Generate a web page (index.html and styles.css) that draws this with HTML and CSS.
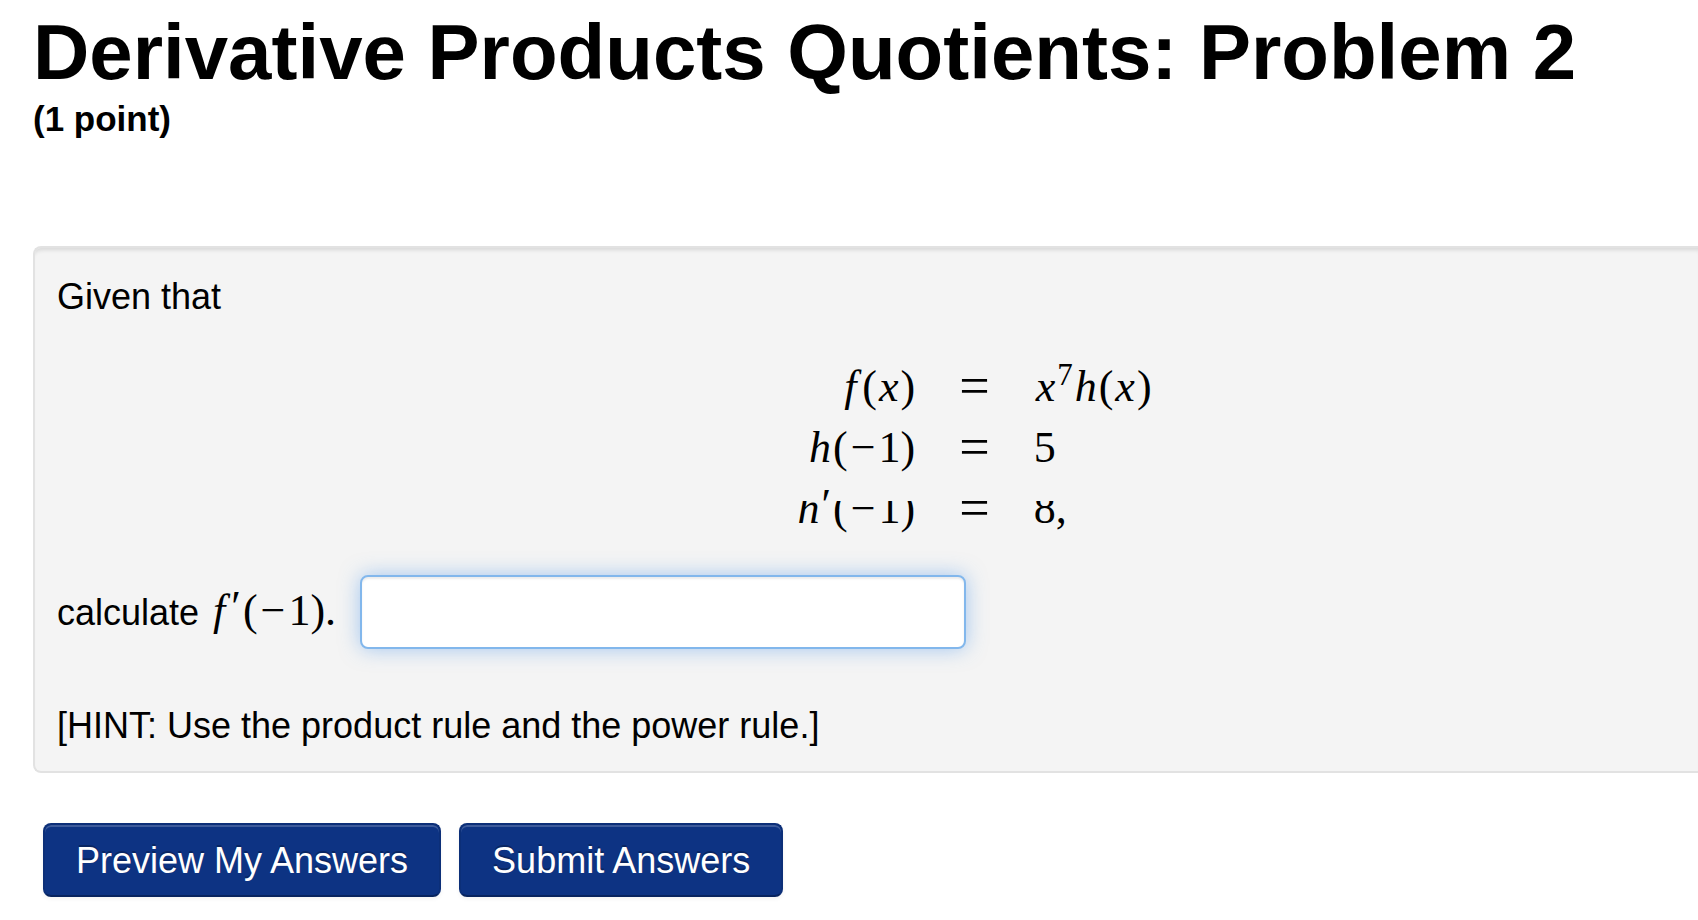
FILE: index.html
```
<!DOCTYPE html>
<html lang="en">

<head>
    <meta charset="UTF-8">
    <title>Derivative Products Quotients: Problem 2</title>
    <link rel="stylesheet" href="styles.css">
</head>

<body>
    <main class="page">
        <h1 class="title">Derivative Products Quotients: Problem 2</h1>
        <p class="points">(1 point)</p>

        <form class="problem-form">
            <div class="problem">
                <p>Given that</p>
                <div class="equations math">
                    <span class="lhs"><i class="f">f</i>(<i>x</i>)</span>
                    <span class="eq">=</span>
                    <span><i>x</i><sup>7</sup><i>h</i>(<i>x</i>)</span>

                    <span class="lhs"><i>h</i>(<span class="minus">−</span>1)</span>
                    <span class="eq">=</span>
                    <span>5</span>

                    <!-- the last row is cut off at the top -->
                    <span class="lhs"><span class="cut"><i>h</i></span><span class="prime">′</span><span class="cut">(<span class="minus">−</span>1)</span></span>
                    <span class="eq">=</span>
                    <span class="cut">8,</span>
                </div>
                <div class="answer">
                    <label for="answer">calculate <span class="math"><i class="f">f</i><span class="prime">′</span>(<span class="minus">−</span>1).</span></label>
                    <input type="text" id="answer" class="answer-input" autocomplete="off">
                </div>
                <p>[HINT: Use the product rule and the power rule.]</p>
            </div>
            <div class="buttons">
                <button type="button" class="btn">Preview My Answers</button>
                <button type="submit" class="btn">Submit Answers</button>
            </div>
        </form>
    </main>
</body>

</html>
```

FILE: styles.css
```
* {
    box-sizing: border-box;
}

body {
    margin: 0;
    background: #fff;
    color: #000;
    font-family: "Liberation Sans", Arial, sans-serif;
    font-size: 36px;
    line-height: 40px;
}

p {
    margin: 0;
}

.page {
    padding: 12px 0 20px 33px;
}

.title {
    margin: 0;
    font-size: 78px;
    line-height: 80px;
}

.points {
    margin-top: 7px;
    font-size: 35px;
    font-weight: bold;
}

/* open on the right, the box runs up to the window edge */
.problem {
    margin-top: 107px;
    padding: 29px 0 25px 22px;
    background: #f4f4f4;
    border: 2px solid #e2e2e2;
    border-right: none;
    border-radius: 8px 0 0 8px;
    box-shadow: inset 0 5px 4px -3px rgba(0, 0, 0, 0.12);
}

.math {
    font-family: "Liberation Serif", "Times New Roman", serif;
    font-size: 44px;
}

.math i {
    margin: 0 2px;
}

.math .f {
    margin: 0 6px 0 4px;
}

.math sup {
    font-size: 31px;
    line-height: 0;
    vertical-align: 16px;
}

.minus {
    margin: 0 3px;
}

.prime {
    margin-right: 2px;
    line-height: 0;
    vertical-align: 4px;
}

.equations {
    display: grid;
    grid-template-columns: auto auto auto;
    justify-content: center;
    column-gap: 44px;
    margin: 39px 0 36px;
    padding-left: 192px;
    line-height: 61px;
}

.lhs {
    text-align: right;
}

.eq {
    font-size: 54px;
}

.cut {
    display: inline-block;
    clip-path: inset(23px 0 0 0);
}

.answer {
    display: flex;
    align-items: center;
    gap: 24px;
    margin-bottom: 57px;
}

.answer-input {
    width: 606px;
    height: 74px;
    padding: 8px 12px;
    background: #fff;
    border: 2px solid #82b7ec;
    border-radius: 8px;
    box-shadow: inset 0 2px 2px rgba(0, 0, 0, 0.08), 0 0 20px rgba(82, 154, 236, 0.5);
    font: inherit;
    outline: none;
}

.buttons {
    display: flex;
    gap: 18px;
    margin: 50px 0 0 10px;
}

.btn {
    padding: 16px 31px 14px;
    background: #0d3383;
    border: 2px solid #0c2f78;
    border-bottom-color: #08245f;
    border-radius: 8px;
    box-shadow: inset 0 2px 0 rgba(255, 255, 255, 0.2), 0 2px 4px rgba(0, 0, 0, 0.05);
    color: #fff;
    font: inherit;
    text-shadow: 0 -2px 0 rgba(0, 0, 0, 0.25);
    cursor: pointer;
}
```
